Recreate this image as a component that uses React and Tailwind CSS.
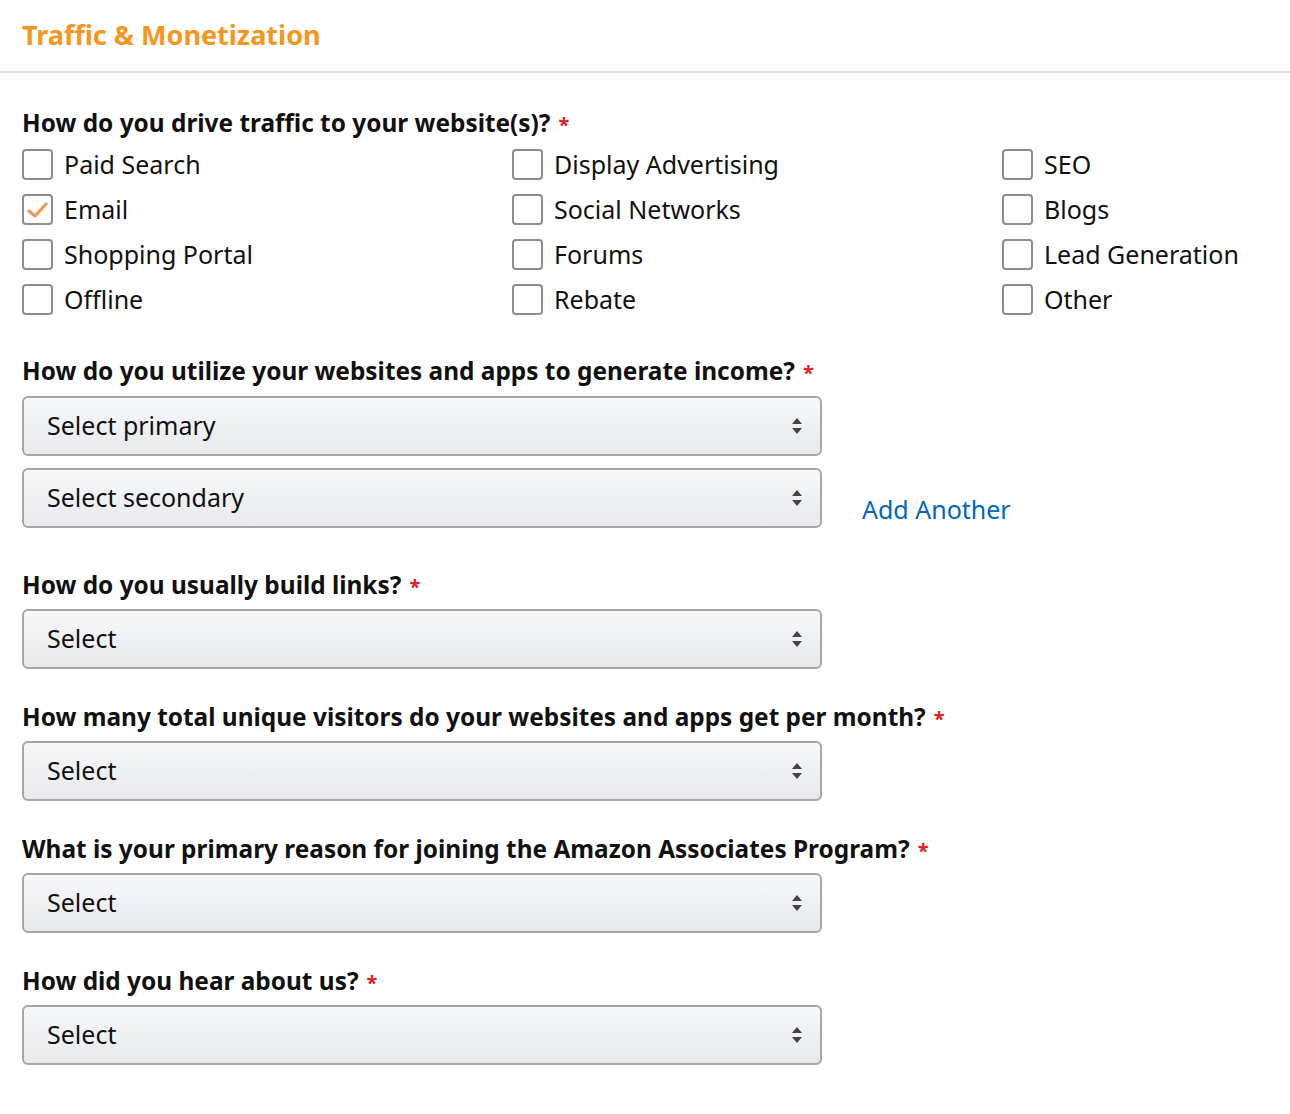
import React, { useState } from "react";

const traffic = [
  ["Paid Search", "Display Advertising", "SEO"],
  ["Email", "Social Networks", "Blogs"],
  ["Shopping Portal", "Forums", "Lead Generation"],
  ["Offline", "Rebate", "Other"],
];

function Label({ children }) {
  return (
    <div className="flex h-[30px] items-baseline text-[24.4px] font-bold leading-[30px] text-[#111]">
      {children}
      <span className="ml-[8px] text-[20px] font-bold leading-[30px] text-[#e02020]">*</span>
    </div>
  );
}

function Checkbox({ label, checked, onToggle }) {
  return (
    <label className="flex h-[45px] cursor-pointer items-center">
      <span className="flex h-[31px] w-[31px] shrink-0 items-center justify-center rounded-[4px] border-2 border-[#8d8d8d] bg-white">
        {checked && (
          <svg width="22" height="18" viewBox="0 0 22 18">
            <path d="M2 10 L8 15 L19 3" fill="none" stroke="#e89b4f" strokeWidth="3.2" strokeLinecap="round" strokeLinejoin="round" />
          </svg>
        )}
      </span>
      <input type="checkbox" className="hidden" checked={checked} onChange={onToggle} />
      <span className="ml-[11px] text-[25px] text-[#111]">{label}</span>
    </label>
  );
}

function Select({ text }) {
  return (
    <div className="flex h-[60px] w-[800px] items-center justify-between rounded-[6px] border-2 border-[#a6a6a6] bg-gradient-to-b from-[#f7f8fa] to-[#e7e9ec] pl-[23px] pr-[18px]">
      <span className="text-[25px] text-[#111]">{text}</span>
      <svg width="10" height="16" viewBox="0 0 10 16">
        <path d="M5 0 L10 6 L0 6 Z" fill="#444" />
        <path d="M5 16 L10 10 L0 10 Z" fill="#444" />
      </svg>
    </div>
  );
}

function Field({ label, className = "mt-[33px]" }) {
  return (
    <div className={className}>
      <Label>{label}</Label>
      <div className="mt-[9px]">
        <Select text="Select" />
      </div>
    </div>
  );
}

export default function App() {
  const [checked, setChecked] = useState({ Email: true });
  const toggle = (k) => setChecked((p) => ({ ...p, [k]: !p[k] }));

  return (
    <div className="min-h-[1114px] w-[1290px] bg-white font-['Noto_Sans',sans-serif] text-[#111]">
      <div className="flex h-[73px] items-center border-b-2 border-[#dddddd] px-[22px]">
        <h1 className="text-[27px] font-bold text-[#f7961c]">Traffic &amp; Monetization</h1>
      </div>

      <div className="px-[22px] pt-[35px]">
        <Label>How do you drive traffic to your website(s)?</Label>
        <div className="mt-[4px] grid grid-cols-[490px_490px_1fr]">
          {traffic.flat().map((t) => (
            <Checkbox key={t} label={t} checked={!!checked[t]} onToggle={() => toggle(t)} />
          ))}
        </div>

        <div className="mt-[34px]">
          <Label>How do you utilize your websites and apps to generate income?</Label>
          <div className="mt-[10px] flex flex-col gap-[11px]">
            <Select text="Select primary" />
            <div className="flex items-center">
              <Select text="Select secondary" />
              <a href="#" className="ml-[40px] mt-[24px] text-[25px] text-[#0066c0]">
                Add Another
              </a>
            </div>
          </div>
        </div>

        <Field label="How do you usually build links?" className="mt-[41px]" />
        <Field label="How many total unique visitors do your websites and apps get per month?" />
        <Field label="What is your primary reason for joining the Amazon Associates Program?" />
        <Field label="How did you hear about us?" />
      </div>
    </div>
  );
}
